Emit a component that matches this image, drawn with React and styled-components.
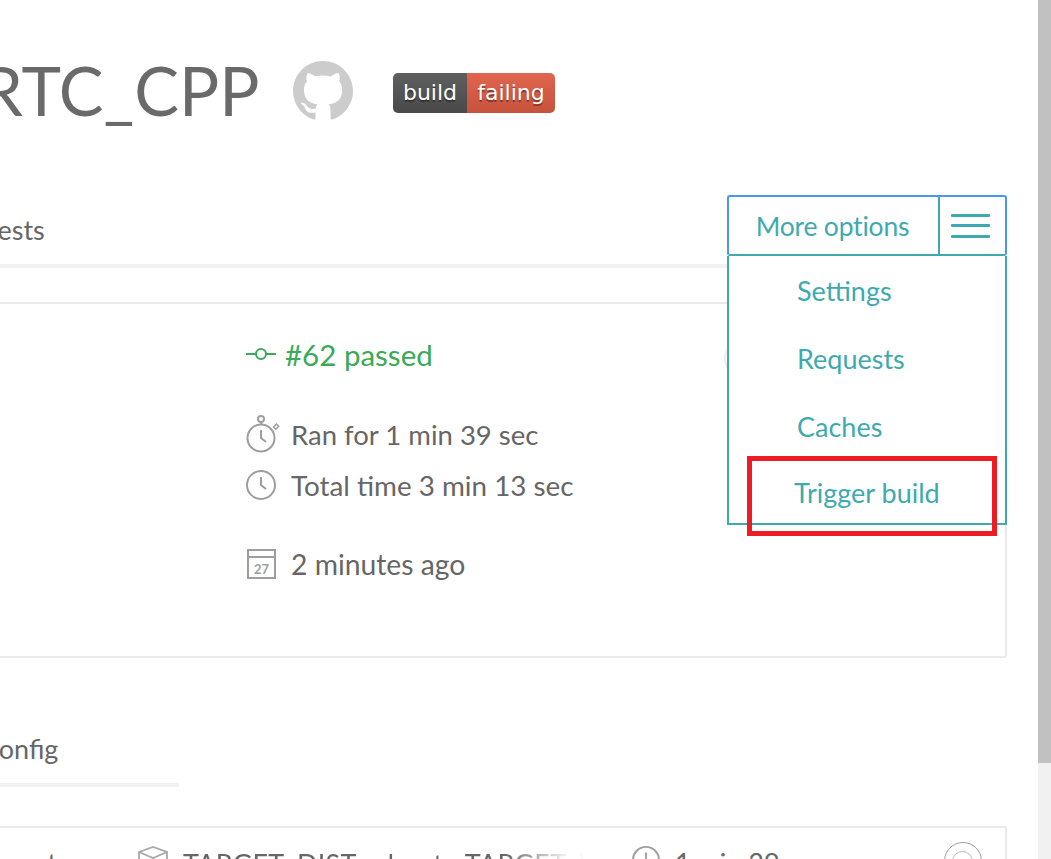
import React from "react";
import styled, { createGlobalStyle } from "styled-components";

const Global = createGlobalStyle`
  html, body {
    margin: 0;
    padding: 0;
    background: #fff;
    overflow: hidden;
  }
`;

const FONT = `"Lato", "Open Sans", sans-serif`;

const GitHubMark = () => (
  <svg width="60" height="60" viewBox="0 0 16 16" fill="#ccc">
    <path d="M8 0C3.58 0 0 3.58 0 8c0 3.54 2.29 6.53 5.47 7.59.4.07.55-.17.55-.38 0-.19-.01-.82-.01-1.49-2.01.37-2.53-.49-2.69-.94-.09-.23-.48-.94-.82-1.13-.28-.15-.68-.52-.01-.53.63-.01 1.08.58 1.23.82.72 1.21 1.87.87 2.33.66.07-.52.28-.87.51-1.07-1.78-.2-3.64-.89-3.64-3.95 0-.87.31-1.59.82-2.15-.08-.2-.36-1.02.08-2.12 0 0 .67-.21 2.2.82.64-.18 1.32-.27 2-.27s1.36.09 2 .27c1.53-1.04 2.2-.82 2.2-.82.44 1.1.16 1.92.08 2.12.51.56.82 1.27.82 2.15 0 3.07-1.87 3.75-3.65 3.95.29.25.54.73.54 1.48 0 1.07-.01 1.93-.01 2.2 0 .21.15.46.55.38A8.01 8.01 0 0 0 16 8c0-4.42-3.58-8-8-8z" />
  </svg>
);

const CommitIcon = () => (
  <svg width="30" height="14" viewBox="0 0 30 14" fill="none" stroke="#39aa56" strokeWidth="2">
    <circle cx="15" cy="7" r="5" />
    <path d="M0 7h10M20 7h10" />
  </svg>
);

const StopwatchIcon = () => (
  <svg width="34" height="38" viewBox="0 0 34 38" fill="none" stroke="#9e9e9e" strokeWidth="2">
    <circle cx="15" cy="23" r="13.5" />
    <circle cx="15" cy="4" r="3" />
    <path d="M15 7v2.5M15 15v8l5 4" />
    <path d="M27.5 12l3-3 2.2 2.2-3 3z" strokeWidth="1.5" />
  </svg>
);

const ClockIcon = ({ size = 30 }) => (
  <svg width={size} height={size} viewBox="0 0 30 30" fill="none" stroke="#9e9e9e" strokeWidth="2">
    <circle cx="15" cy="15" r="14" />
    <path d="M15 7v8l5 4" />
  </svg>
);

const CalendarIcon = () => (
  <svg width="30" height="30" viewBox="0 0 30 30" fill="none">
    <rect x="2" y="1" width="27" height="28" stroke="#9e9e9e" strokeWidth="2" />
    <path d="M2 8h27" stroke="#9e9e9e" strokeWidth="2" />
    <text x="15.5" y="25" fontSize="13" fontWeight="700" fontFamily="Lato, sans-serif" textAnchor="middle" fill="#9e9e9e">27</text>
  </svg>
);

const BoxIcon = () => (
  <svg width="30" height="30" viewBox="0 0 30 30" fill="none" stroke="#a8a8a8" strokeWidth="1.8">
    <path d="M1 6l14-5 14 5v18l-14 5-14-5z" />
    <path d="M1 6l14 6 14-6M15 12v17" />
  </svg>
);

const Page = styled.div`
  position: relative;
  width: 1051px;
  height: 859px;
  overflow: hidden;
  background: #fff;
  font-family: ${FONT};
  color: #666;
`;

const Scrollbar = styled.div`
  position: absolute;
  top: 0;
  right: 0;
  width: 13px;
  height: 100%;
  background: #f1f1f1;
  &::before {
    content: "";
    display: block;
    height: 763px;
    background: #c1c1c1;
  }
`;

const Main = styled.main`
  width: 1007px;
  display: flex;
  flex-direction: column;
`;

const TitleRow = styled.header`
  height: 195px;
  display: flex;
  align-items: flex-start;
  padding-top: 60px;
  box-sizing: border-box;
  margin-left: -19px;
`;

const Title = styled.h1`
  margin: -3px 0 0;
  width: 277px;
  font-size: 67px;
  line-height: 66px;
  font-weight: 400;
  color: #6a6a6a;
  white-space: nowrap;
`;

const Avatar = styled.div`
  margin: 1px 0 0 35px;
  height: 60px;
`;

const Badge = styled.div`
  display: flex;
  margin: 13px 0 0 40px;
  height: 40px;
  border-radius: 5px;
  overflow: hidden;
  font-family: "DejaVu Sans", sans-serif;
  font-size: 22px;
  line-height: 39px;
  color: #fff;
  text-shadow: 0 2px 1px rgba(0, 0, 0, 0.4);
`;

const BadgeLabel = styled.span`
  width: 74px;
  text-align: center;
  background: linear-gradient(#5f5f5f, #494949);
`;

const BadgeValue = styled.span`
  width: 88px;
  text-align: center;
  background: linear-gradient(#e0654f, #c7523c);
`;

const TabBar = styled.nav`
  height: 73px;
  width: ${(p) => p.$width}px;
  box-sizing: border-box;
  border-bottom: 4px solid #f1f1f1;
  font-size: 27px;
  line-height: 70px;
  margin-top: ${(p) => p.$top || 0}px;
  overflow: hidden;
  white-space: nowrap;
`;

const TabText = styled.span`
  display: block;
  margin-left: ${(p) => p.$shift}px;
`;

const BuildCard = styled.section`
  margin-top: 34px;
  height: 356px;
  box-sizing: border-box;
  border: 2px solid #eaeaea;
  border-left: 0;
  border-radius: 0 3px 3px 0;
  padding: 28px 0 0 246px;
  position: relative;
`;

const Passed = styled.div`
  display: flex;
  align-items: center;
  gap: 9px;
  height: 44px;
  font-size: 29.5px;
  color: #39aa56;
`;

const Detail = styled.div`
  display: flex;
  align-items: center;
  height: 40px;
  margin-top: ${(p) => p.$gap}px;
  font-size: ${(p) => p.$size}px;
  white-space: nowrap;
`;

const DetailIcon = styled.span`
  width: 45px;
  display: flex;
`;

const RestartRing = styled.span`
  position: absolute;
  left: 724px;
  top: 34px;
  width: 36px;
  height: 36px;
  border: 2px solid #eee;
  border-radius: 50%;
`;

const JobRow = styled.section`
  margin-top: 39px;
  height: 60px;
  box-sizing: border-box;
  border: 2px solid #eaeaea;
  border-left: 0;
  border-bottom: 0;
  border-radius: 0 3px 0 0;
  display: flex;
  align-items: flex-start;
  font-size: 27px;
  white-space: nowrap;
  position: relative;
`;

const JobName = styled.span`
  width: 138px;
  padding-top: 18px;
  text-indent: -2px;
`;

const Env = styled.span`
  display: flex;
  gap: 15px;
  width: 494px;
  svg {
    flex: none;
    margin-top: 18px;
  }
`;

const EnvText = styled.span`
  width: 410px;
  padding-top: 19px;
  letter-spacing: 0.2px;
  overflow: hidden;
  mask-image: linear-gradient(to right, #000 78%, rgba(0, 0, 0, 0.12) 93%, transparent);
`;

const Time = styled.span`
  display: flex;
  gap: 15px;
  padding-top: 18px;
`;

const Ring = styled.span`
  position: absolute;
  left: 944px;
  top: 14px;
  width: 38px;
  height: 38px;
  box-sizing: border-box;
  border: 1.5px solid #9e9e9e;
  border-radius: 50%;
  &::after {
    content: "";
    position: absolute;
    left: 7px;
    top: 8px;
    width: 21px;
    height: 21px;
    box-sizing: border-box;
    border: 1.5px solid #bbb;
    border-radius: 50%;
  }
`;

const Options = styled.div`
  position: absolute;
  left: 727px;
  top: 195px;
  width: 280px;
  font-size: 27px;
  color: #3eaaaf;
`;

const OptionsHead = styled.div`
  display: flex;
  height: 61px;
  box-sizing: border-box;
  border: 2px solid #4b96f3;
  border-bottom-color: #3eaaaf;
  border-radius: 3px;
  background: #fff;
`;

const OptionsLabel = styled.div`
  width: 211px;
  box-sizing: border-box;
  border-right: 2px solid #3eaaaf;
  text-align: center;
  line-height: 58px;
  font-size: 26.5px;
  letter-spacing: -0.2px;
  padding-right: 2px;
`;

const Burger = styled.div`
  flex: 1;
  display: flex;
  flex-direction: column;
  align-items: center;
  justify-content: center;
  gap: 7.5px;
  padding-right: 5px;
  i {
    display: block;
    width: 39px;
    height: 3px;
    background: #3eaaaf;
    border-radius: 1px;
  }
`;

const OptionsMenu = styled.ul`
  list-style: none;
  margin: 0;
  padding: 1px 0 0;
  height: 269px;
  box-sizing: border-box;
  border: 2px solid #3eaaaf;
  border-top: 0;
  background: #fff;
`;

const OptionsItem = styled.li`
  height: 68px;
  line-height: 68px;
  padding-left: ${(p) => p.$indent}px;
  &:last-child {
    height: 64px;
    line-height: 64px;
  }
`;

const Annotation = styled.div`
  position: absolute;
  left: 747px;
  top: 456px;
  width: 250px;
  height: 80px;
  box-sizing: border-box;
  border: 5px solid #ed1c24;
`;

const App = () => {
  return (
    <Page>
      <Global />
      <Main>
        <TitleRow>
          <Title>RTC_CPP</Title>
          <Avatar>
            <GitHubMark />
          </Avatar>
          <Badge>
            <BadgeLabel>build</BadgeLabel>
            <BadgeValue>failing</BadgeValue>
          </Badge>
        </TitleRow>
        <TabBar $width={1007}>
          <TabText $shift={-63}>Requests</TabText>
        </TabBar>
        <BuildCard>
          <Passed>
            <CommitIcon />
            #62 passed
          </Passed>
          <Detail $gap={38} $size={27.5}>
            <DetailIcon>
              <StopwatchIcon />
            </DetailIcon>
            Ran for 1 min 39 sec
          </Detail>
          <Detail $gap={11} $size={27.8}>
            <DetailIcon>
              <ClockIcon />
            </DetailIcon>
            Total time 3 min 13 sec
          </Detail>
          <Detail $gap={39} $size={28.3}>
            <DetailIcon>
              <CalendarIcon />
            </DetailIcon>
            2 minutes ago
          </Detail>
          <RestartRing />
        </BuildCard>
        <TabBar $width={179} $top={56}>
          <TabText $shift={-81}>Build config</TabText>
        </TabBar>
        <JobRow>
          <JobName>e oct</JobName>
          <Env>
            <BoxIcon />
            <EnvText>TARGET_DIST=ubuntu TARGET_\</EnvText>
          </Env>
          <Time>
            <ClockIcon size={28} />1 min 39
          </Time>
          <Ring />
        </JobRow>
      </Main>
      <Options>
        <OptionsHead>
          <OptionsLabel>More options</OptionsLabel>
          <Burger>
            <i />
            <i />
            <i />
          </Burger>
        </OptionsHead>
        <OptionsMenu>
          <OptionsItem $indent={68}>Settings</OptionsItem>
          <OptionsItem $indent={68}>Requests</OptionsItem>
          <OptionsItem $indent={68}>Caches</OptionsItem>
          <OptionsItem $indent={65}>Trigger build</OptionsItem>
        </OptionsMenu>
      </Options>
      <Annotation />
      <Scrollbar />
    </Page>
  );
};

export default App;
